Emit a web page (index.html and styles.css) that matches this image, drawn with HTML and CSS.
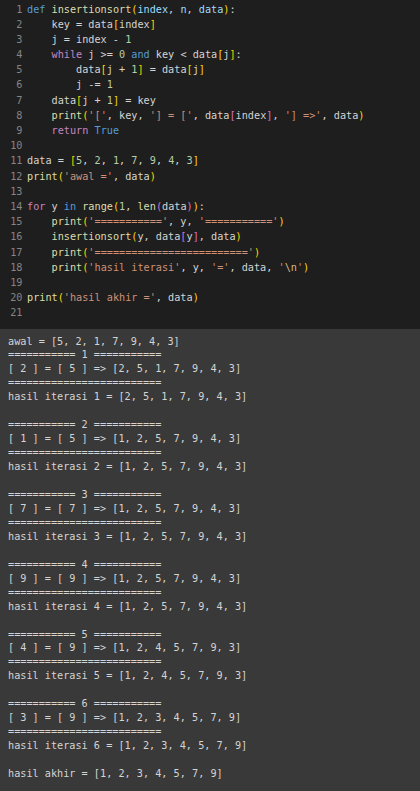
FILE: index.html
```html
<!DOCTYPE html>
<html>
<head>
<meta charset="utf-8">
<link rel="stylesheet" href="styles.css">
</head>
<body>
<div class="editor">
<div class="ln"><span class="num">1</span><span class="code"><span class="kw">def</span> <span class="fn">insertionsort</span><span class="b1">(</span><span class="pa">index</span>, <span class="pa">n</span>, <span class="pa">data</span><span class="b1">)</span>:</span></div>
<div class="ln"><span class="num">2</span><span class="code">    key = data<span class="b1">[</span>index<span class="b1">]</span></span></div>
<div class="ln"><span class="num">3</span><span class="code">    j = index - <span class="nu">1</span></span></div>
<div class="ln"><span class="num">4</span><span class="code">    <span class="ctl">while</span> j &gt;= <span class="nu">0</span> <span class="kw">and</span> key &lt; data<span class="b1">[</span>j<span class="b1">]</span>:</span></div>
<div class="ln"><span class="num">5</span><span class="code">        data<span class="b1">[</span>j + <span class="nu">1</span><span class="b1">]</span> = data<span class="b1">[</span>j<span class="b1">]</span></span></div>
<div class="ln"><span class="num">6</span><span class="code">        j -= <span class="nu">1</span></span></div>
<div class="ln"><span class="num">7</span><span class="code">    data<span class="b1">[</span>j + <span class="nu">1</span><span class="b1">]</span> = key</span></div>
<div class="ln"><span class="num">8</span><span class="code">    <span class="fn">print</span><span class="b1">(</span><span class="st">'['</span>, key, <span class="st">'] = ['</span>, data<span class="b2">[</span>index<span class="b2">]</span>, <span class="st">'] =&gt;'</span>, data<span class="b1">)</span></span></div>
<div class="ln"><span class="num">9</span><span class="code">    <span class="ctl">return</span> <span class="kw">True</span></span></div>
<div class="ln"><span class="num">10</span><span class="code"></span></div>
<div class="ln"><span class="num">11</span><span class="code">data = <span class="b1">[</span><span class="nu">5</span>, <span class="nu">2</span>, <span class="nu">1</span>, <span class="nu">7</span>, <span class="nu">9</span>, <span class="nu">4</span>, <span class="nu">3</span><span class="b1">]</span></span></div>
<div class="ln"><span class="num">12</span><span class="code"><span class="fn">print</span><span class="b1">(</span><span class="st">'awal ='</span>, data<span class="b1">)</span></span></div>
<div class="ln"><span class="num">13</span><span class="code"></span></div>
<div class="ln"><span class="num">14</span><span class="code"><span class="ctl">for</span> y <span class="kw">in</span> <span class="fn">range</span><span class="b1">(</span><span class="nu">1</span>, <span class="fn">len</span><span class="b2">(</span>data<span class="b2">)</span><span class="b1">)</span>:</span></div>
<div class="ln"><span class="num">15</span><span class="code">    <span class="fn">print</span><span class="b1">(</span><span class="st">'==========='</span>, y, <span class="st">'==========='</span><span class="b1">)</span></span></div>
<div class="ln"><span class="num">16</span><span class="code">    <span class="fn">insertionsort</span><span class="b1">(</span>y, data<span class="b2">[</span>y<span class="b2">]</span>, data<span class="b1">)</span></span></div>
<div class="ln"><span class="num">17</span><span class="code">    <span class="fn">print</span><span class="b1">(</span><span class="st">'========================='</span><span class="b1">)</span></span></div>
<div class="ln"><span class="num">18</span><span class="code">    <span class="fn">print</span><span class="b1">(</span><span class="st">'hasil iterasi'</span>, y, <span class="st">'='</span>, data, <span class="st">'<span class="esc">\n</span>'</span><span class="b1">)</span></span></div>
<div class="ln"><span class="num">19</span><span class="code"></span></div>
<div class="ln"><span class="num">20</span><span class="code"><span class="fn">print</span><span class="b1">(</span><span class="st">'hasil akhir ='</span>, data<span class="b1">)</span></span></div>
<div class="ln"><span class="num">21</span><span class="code"></span></div>
</div>
<pre class="terminal">awal = [5, 2, 1, 7, 9, 4, 3]
=========== 1 ===========
[ 2 ] = [ 5 ] =&gt; [2, 5, 1, 7, 9, 4, 3]
=========================
hasil iterasi 1 = [2, 5, 1, 7, 9, 4, 3]

=========== 2 ===========
[ 1 ] = [ 5 ] =&gt; [1, 2, 5, 7, 9, 4, 3]
=========================
hasil iterasi 2 = [1, 2, 5, 7, 9, 4, 3]

=========== 3 ===========
[ 7 ] = [ 7 ] =&gt; [1, 2, 5, 7, 9, 4, 3]
=========================
hasil iterasi 3 = [1, 2, 5, 7, 9, 4, 3]

=========== 4 ===========
[ 9 ] = [ 9 ] =&gt; [1, 2, 5, 7, 9, 4, 3]
=========================
hasil iterasi 4 = [1, 2, 5, 7, 9, 4, 3]

=========== 5 ===========
[ 4 ] = [ 9 ] =&gt; [1, 2, 4, 5, 7, 9, 3]
=========================
hasil iterasi 5 = [1, 2, 4, 5, 7, 9, 3]

=========== 6 ===========
[ 3 ] = [ 9 ] =&gt; [1, 2, 3, 4, 5, 7, 9]
=========================
hasil iterasi 6 = [1, 2, 3, 4, 5, 7, 9]

hasil akhir = [1, 2, 3, 4, 5, 7, 9]</pre>
</body>
</html>
```
FILE: styles.css
```css
html, body {
  margin: 0;
  padding: 0;
  background: #393939;
}
body {
  width: 420px;
  height: 791px;
  overflow: hidden;
  font-family: "DejaVu Sans Mono", "Liberation Mono", monospace;
  font-size: 10.2px;
}
.editor {
  background: #1e1e1e;
  height: 329px;
  box-sizing: border-box;
  padding-top: 1.5px;
}
.ln {
  display: flex;
  height: 15.2px;
  line-height: 15.2px;
  white-space: pre;
}
.num {
  width: 22.5px;
  text-align: right;
  color: #858585;
  flex: none;
}
.code {
  padding-left: 4.5px;
  color: #d4d4d4;
}
.kw { color: #569cd6; }
.ctl { color: #c586c0; }
.fn { color: #dcdcaa; }
.pa { color: #9cdcfe; }
.nu { color: #b5cea8; }
.st { color: #ce9178; }
.esc { color: #d7ba7d; }
.b1 { color: #ffd700; }
.b2 { color: #da70d6; }
.terminal {
  margin: 0;
  background: #393939;
  color: #d4d4d4;
  font-family: inherit;
  font-size: 10.2px;
  line-height: 13.95px;
  padding: 5.5px 0 0 8px;
}
```
